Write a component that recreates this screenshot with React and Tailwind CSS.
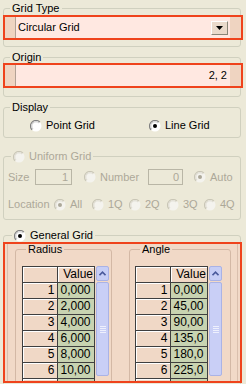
import React from "react";

const radius = ["0,000", "2,000", "4,000", "6,000", "8,000", "10,00", ""];
const angle = ["0,000", "45,00", "90,00", "135,0", "180,0", "225,0", ""];

function Radio({ checked, disabled }) {
  const shade = disabled ? "#c9c6b6" : "#808080";
  return (
    <svg width="12" height="12" viewBox="0 0 12 12" className="shrink-0">
      <circle cx="6" cy="6" r="5.5" fill={disabled ? "#f4f3ee" : "#ffffff"} />
      <path d="M2.1 9.9 A5.5 5.5 0 0 1 9.9 2.1" stroke={shade} strokeWidth="1.2" fill="none" />
      <path d="M3 9 A4.2 4.2 0 0 1 9 3" stroke={disabled ? "#dedbd0" : "#c8c8c8"} strokeWidth="1" fill="none" />
      {checked && <circle cx="6" cy="6" r="2" fill={disabled ? "#aca899" : "#000"} />}
    </svg>
  );
}

function Group({ label, className, legendClass, children }) {
  return (
    <fieldset className={"border border-[#d0d0bf] rounded-[3px] " + className}>
      <legend className={"px-[2px] leading-[13px] " + (legendClass || "ml-[6px]")}>{label}</legend>
      {children}
    </fieldset>
  );
}

function Field({ children }) {
  return (
    <div className="flex h-[25px] -ml-[1px] -mr-[3px] border-2 border-[#ef431c] bg-[#efd4c1] pl-[10px] pr-[11px]">
      <div className="flex flex-1 items-center bg-[#ffe8e1] border-l border-[#b3a195]">{children}</div>
    </div>
  );
}

function DropButton() {
  return (
    <div className="mr-[2px] flex h-[14px] w-[17px] items-center justify-center border border-t-white border-l-white border-r-[#8a8678] border-b-[#8a8678] bg-[#eadacb]">
      <svg width="7" height="4" viewBox="0 0 7 4">
        <path d="M0 0h7L3.5 4z" fill="#000" />
      </svg>
    </div>
  );
}

function RadioLabel({ checked, disabled, children, className }) {
  return (
    <div className={"flex items-center gap-[4px] " + (className || "")}>
      <Radio checked={checked} disabled={disabled} />
      <span className={disabled ? "text-[#aca899]" : ""}>{children}</span>
    </div>
  );
}

function Cell({ className, children }) {
  return (
    <div className={"h-[16px] border-r border-b border-[#3f3f3f] leading-[15px] " + className}>
      {children}
    </div>
  );
}

function Table({ values }) {
  return (
    <div className="flex gap-[1px]">
      <div className="w-[73px] border-l border-t border-[#3f3f3f] font-['Liberation_Sans_Narrow','Liberation_Sans',sans-serif] text-[12px]">
        <div className="flex">
          <Cell className="w-[35px] bg-[#f0d8c6] shadow-[inset_1px_1px_0_#fff]" />
          <Cell className="w-[38px] bg-[#f0d8c6] text-right pr-[1px] shadow-[inset_1px_1px_0_#fff]">Value</Cell>
        </div>
        {values.map((v, i) => (
          <div className="flex" key={i}>
            <Cell className="w-[35px] bg-[#f0d8c6] text-right pr-[2px] shadow-[inset_1px_1px_0_#fff]">
              {v ? i + 1 : ""}
            </Cell>
            <Cell className="w-[38px] bg-[#c8d3b1] pl-[3px]">{v}</Cell>
          </div>
        ))}
      </div>
      <div className="flex w-[13px] flex-col gap-[1px]">
        <div className="flex h-[15px] items-center justify-center rounded-[2px] border border-[#a9b2e6] bg-[#c7cef6]">
          <svg width="7" height="5" viewBox="0 0 7 5">
            <path d="M0.5 4.2 L3.5 1.2 L6.5 4.2" stroke="#4a5a9c" strokeWidth="1.6" fill="none" />
          </svg>
        </div>
        <div className="flex h-[94px] flex-col items-center justify-center gap-[1px] rounded-[2px] border border-[#aab3e6] bg-[#c9cff6]">
          <div className="h-px w-[6px] bg-[#eef0fd]" />
          <div className="h-px w-[6px] bg-[#eef0fd]" />
          <div className="h-px w-[6px] bg-[#eef0fd]" />
          <div className="h-px w-[6px] bg-[#eef0fd]" />
        </div>
      </div>
    </div>
  );
}

export default function App() {
  return (
    <div className="h-[384px] w-[246px] overflow-hidden bg-[#ece9d8] pl-[3px] pr-[5px] font-['Liberation_Sans',sans-serif] text-[11px] leading-[13px] text-black">
      <Group label="Grid Type" className="mt-[2px] pb-[6px]">
        <Field>
          <span className="flex-1 pl-[2px]">Circular Grid</span>
          <DropButton />
        </Field>
      </Group>

      <Group label="Origin" className="mt-[4px] pb-[8px]">
        <div className="-mt-[1px]">
          <Field>
            <span className="flex-1 pr-[3px] text-right">2, 2</span>
          </Field>
        </div>
      </Group>

      <Group label="Display" className="mt-[4px] pb-[5px]">
        <div className="mt-[5px] flex pl-[26px]">
          <RadioLabel className="w-[119px]">Point Grid</RadioLabel>
          <RadioLabel checked>Line Grid</RadioLabel>
        </div>
      </Group>

      <Group
        label={<RadioLabel disabled>Uniform Grid</RadioLabel>}
        legendClass="ml-[7px]"
        className="mt-[12px] pb-[8px]"
      >
        <div className="mt-[6px] flex h-[16px] items-center text-[#aca899]">
          <span className="w-[31px] pl-[4px]">Size</span>
          <div className="flex h-[16px] w-[37px] items-center justify-end border border-[#b9b6a6] pr-[3px]">1</div>
          <RadioLabel disabled className="ml-[12px] w-[64px]">Number</RadioLabel>
          <div className="flex h-[16px] w-[35px] items-center justify-end border border-[#b9b6a6] pr-[3px]">0</div>
          <RadioLabel disabled checked className="ml-[11px]">Auto</RadioLabel>
        </div>
        <div className="mt-[13px] flex items-center text-[#aca899]">
          <span className="w-[50px] pl-[4px]">Location</span>
          <RadioLabel disabled checked className="w-[38px]">All</RadioLabel>
          <RadioLabel disabled className="w-[37px]">1Q</RadioLabel>
          <RadioLabel disabled className="w-[38px]">2Q</RadioLabel>
          <RadioLabel disabled className="w-[37px]">3Q</RadioLabel>
          <RadioLabel disabled>4Q</RadioLabel>
        </div>
      </Group>

      <Group
        label={<RadioLabel checked>General Grid</RadioLabel>}
        legendClass="ml-[8px]"
        className="mt-[9px] pb-[8px]"
      >
        <div className="-ml-[1px] -mr-[2px] h-[141px] overflow-hidden border-2 border-[#ef431c] bg-[#f1d9c7]">
          <div className="mx-[2px] flex h-full border-x border-[#d9bfad]">
            <fieldset className="ml-[7px] h-[150px] w-[97px] shrink-0 rounded-[3px] border border-[#d3b8a5] pl-[6px]">
              <legend className="ml-[4px] px-[2px] leading-[11px]">Radius</legend>
              <div className="mt-[11px]">
                <Table values={radius} />
              </div>
            </fieldset>
            <fieldset className="ml-[17px] h-[150px] w-[102px] shrink-0 rounded-[3px] border border-[#d3b8a5] pl-[5px]">
              <legend className="ml-[5px] px-[2px] leading-[11px]">Angle</legend>
              <div className="mt-[11px]">
                <Table values={angle} />
              </div>
            </fieldset>
          </div>
        </div>
      </Group>
    </div>
  );
}
